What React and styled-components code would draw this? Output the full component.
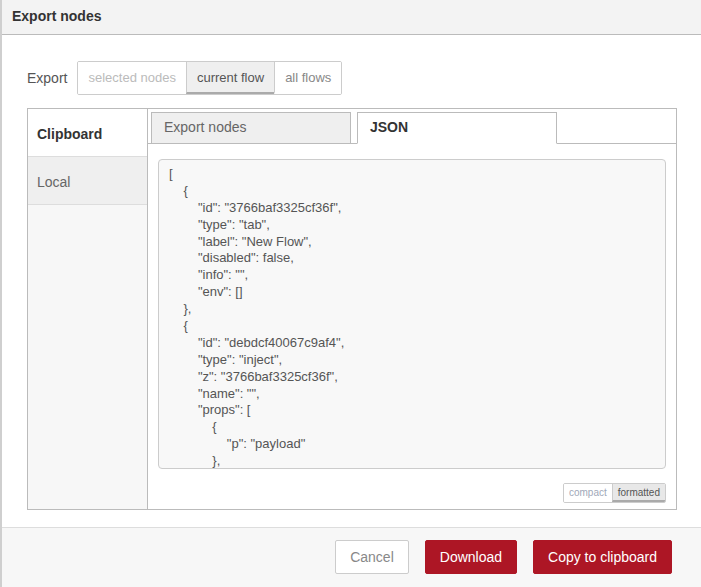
import React from "react";
import styled, { createGlobalStyle } from "styled-components";

const GlobalStyle = createGlobalStyle`
  html, body {
    margin: 0;
    padding: 0;
    background: #fff;
  }
  body {
    font-family: "Liberation Sans", Arial, sans-serif;
    font-size: 14px;
    color: #555;
  }
  * {
    box-sizing: border-box;
  }
`;

const Dialog = styled.div`
  width: 701px;
  height: 587px;
  display: flex;
  flex-direction: column;
  border-left: 2px solid #cfcfcf;
  overflow: hidden;
`;

const Header = styled.div`
  height: 35px;
  flex: none;
  display: flex;
  align-items: center;
  padding: 0 10px 2px;
  background: #f3f3f3;
  border-bottom: 1px solid #bbb;
  font-size: 14px;
  font-weight: bold;
  color: #333;
`;

const Body = styled.div`
  flex: 1;
  padding: 26px 24px 0 25px;
`;

const ExportRow = styled.div`
  display: flex;
  align-items: center;
  gap: 10px;
`;

const Label = styled.span`
  font-size: 14px;
  color: #555;
`;

const ButtonGroup = styled.div`
  display: flex;
  height: 34px;
  border: 1px solid #ccc;
  border-radius: 2px;
  overflow: hidden;
`;

const GroupButton = styled.div`
  display: flex;
  align-items: center;
  padding: 0 10px;
  font-size: 13px;
  color: ${(p) => (p.$disabled ? "#bbb" : p.$selected ? "#555" : "#888")};
  background: ${(p) => (p.$selected ? "#efefef" : "#fff")};
  border-left: ${(p) => (p.$first ? "none" : "1px solid #ccc")};
  border-bottom: 2px solid ${(p) => (p.$selected ? "#aaa" : "transparent")};
`;

const Panel = styled.div`
  margin-top: 13px;
  height: 402px;
  display: flex;
  border: 1px solid #bbb;
`;

const SideCol = styled.div`
  width: 120px;
  flex: none;
  background: #f7f7f7;
  border-right: 1px solid #bbb;
  display: flex;
  flex-direction: column;
`;

const SideItem = styled.div`
  height: 48px;
  display: flex;
  align-items: center;
  padding: 2px 9px 0;
  font-size: 14px;
  font-weight: ${(p) => (p.$title ? "bold" : "normal")};
  color: ${(p) => (p.$title ? "#333" : "#666")};
  background: ${(p) => (p.$title ? "#fff" : "#efefef")};
  border-bottom: 1px solid #ddd;
`;

const Main = styled.div`
  flex: 1;
  display: flex;
  flex-direction: column;
  background: #fff;
`;

const TabBar = styled.div`
  height: 35px;
  flex: none;
  display: flex;
  align-items: flex-end;
  gap: 6px;
  padding-left: 3px;
  border-bottom: 1px solid #bbb;
`;

const Tab = styled.div`
  width: 200px;
  height: 32px;
  margin-bottom: -1px;
  display: flex;
  align-items: center;
  padding: 0 12px 2px;
  font-size: 14px;
  border: 1px solid #bbb;
  border-bottom-color: ${(p) => (p.$active ? "#fff" : "#bbb")};
  background: ${(p) => (p.$active ? "#fff" : "#efefef")};
  font-weight: ${(p) => (p.$active ? "bold" : "normal")};
  color: ${(p) => (p.$active ? "#333" : "#666")};
`;

const Content = styled.div`
  flex: 1;
  display: flex;
  flex-direction: column;
  padding: 15px 10px 0;
`;

const Code = styled.div`
  height: 310px;
  flex: none;
  overflow: hidden;
  padding: 6px 10px;
  background: #f8f8f8;
  border: 1px solid #ccc;
  border-radius: 4px;
  font-size: 13px;
  line-height: 1.3;
  color: #555;
  white-space: pre;
`;

const ToggleRow = styled.div`
  margin-top: 14px;
  display: flex;
  justify-content: flex-end;
`;

const Toggle = styled.div`
  display: flex;
  height: 20px;
  border: 1px solid #ccc;
  border-radius: 2px;
  overflow: hidden;
`;

const ToggleButton = styled.div`
  display: flex;
  align-items: center;
  padding: 0 5px;
  font-size: 10px;
  color: ${(p) => (p.$selected ? "#555" : "#a0a8b8")};
  background: ${(p) => (p.$selected ? "#e8e8e8" : "#fff")};
  border-left: ${(p) => (p.$first ? "none" : "1px solid #ccc")};
  border-bottom: 2px solid ${(p) => (p.$selected ? "#aaa" : "transparent")};
`;

const Footer = styled.div`
  height: 60px;
  flex: none;
  display: flex;
  justify-content: flex-end;
  align-items: flex-start;
  gap: 16px;
  padding: 12px 29px 0 0;
  background: #f7f7f7;
  border-top: 1px solid #ddd;
`;

const Button = styled.div`
  height: 34px;
  display: flex;
  align-items: center;
  padding: 0 14px;
  font-size: 14px;
  border-radius: 2px;
  border: 1px solid ${(p) => (p.$primary ? "#ad1625" : "#ccc")};
  background: ${(p) => (p.$primary ? "#ad1625" : "#fff")};
  color: ${(p) => (p.$primary ? "#fff" : "#888")};
`;

const flow = [
  {
    id: "3766baf3325cf36f",
    type: "tab",
    label: "New Flow",
    disabled: false,
    info: "",
    env: [],
  },
  {
    id: "debdcf40067c9af4",
    type: "inject",
    z: "3766baf3325cf36f",
    name: "",
    props: [{ p: "payload" }, { p: "topic", vt: "str" }],
    repeat: "",
    crontab: "",
    once: false,
    onceDelay: 0.1,
    topic: "",
    payload: "",
    payloadType: "date",
  },
];

const json = JSON.stringify(flow, null, 4).replace(/\[\]/g, "[]");

export default function App() {
  return (
    <>
      <GlobalStyle />
      <Dialog>
        <Header>Export nodes</Header>
        <Body>
          <ExportRow>
            <Label>Export</Label>
            <ButtonGroup>
              <GroupButton $first $disabled>
                selected nodes
              </GroupButton>
              <GroupButton $selected>current flow</GroupButton>
              <GroupButton>all flows</GroupButton>
            </ButtonGroup>
          </ExportRow>
          <Panel>
            <SideCol>
              <SideItem $title>Clipboard</SideItem>
              <SideItem>Local</SideItem>
            </SideCol>
            <Main>
              <TabBar>
                <Tab>Export nodes</Tab>
                <Tab $active>JSON</Tab>
              </TabBar>
              <Content>
                <Code>{json}</Code>
                <ToggleRow>
                  <Toggle>
                    <ToggleButton $first>compact</ToggleButton>
                    <ToggleButton $selected>formatted</ToggleButton>
                  </Toggle>
                </ToggleRow>
              </Content>
            </Main>
          </Panel>
        </Body>
        <Footer>
          <Button>Cancel</Button>
          <Button $primary>Download</Button>
          <Button $primary>Copy to clipboard</Button>
        </Footer>
      </Dialog>
    </>
  );
}
